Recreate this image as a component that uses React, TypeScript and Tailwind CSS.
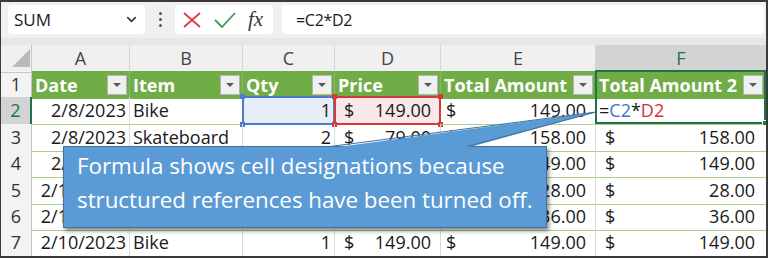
import { ChevronDown } from "lucide-react";

const rows = [
  { n: 2, date: "2/8/2023", item: "Bike", qty: 1, price: "149.00", total: "149.00", total2: "" },
  { n: 3, date: "2/8/2023", item: "Skateboard", qty: 2, price: "79.00", total: "158.00", total2: "158.00" },
  { n: 4, date: "2/9/2023", item: "Bike", qty: 1, price: "149.00", total: "149.00", total2: "149.00" },
  { n: 5, date: "2/10/2023", item: "Helmet", qty: 1, price: "28.00", total: "28.00", total2: "28.00" },
  { n: 6, date: "2/10/2023", item: "Gloves", qty: 2, price: "18.00", total: "36.00", total2: "36.00" },
  { n: 7, date: "2/10/2023", item: "Bike", qty: 1, price: "149.00", total: "149.00", total2: "149.00" },
];

const headers = ["Date", "Item", "Qty", "Price", "Total Amount", "Total Amount 2"];
const letters = ["A", "B", "C", "D", "E", "F"];

function FilterButton() {
  return (
    <div className="mr-[2px] w-[20px] h-[20px] shrink-0 bg-[#f0f0f0] border border-[#b4b4b4] flex items-center justify-center">
      <div className="w-0 h-0 border-l-[4px] border-r-[4px] border-t-[4px] border-l-transparent border-r-transparent border-t-[#5a5a5a]" />
    </div>
  );
}

function Money({ v, pl, pr }: { v: string; pl: string; pr: string }) {
  return (
    <div className={`w-full flex items-center justify-between ${pl} ${pr}`}>
      <span>$</span>
      <span>{v}</span>
    </div>
  );
}

const cell =
  "relative flex items-center border-r border-r-[#dadada] border-b border-b-[#a9d08e] whitespace-nowrap overflow-visible text-[18px] text-[#1a1a1a]";

export default function App() {
  return (
    <div className="relative w-[768px] h-[258px] overflow-hidden bg-white border-t-2 border-r-2 border-b-2 border-l border-[#3a3a3a] font-['Open_Sans',sans-serif]">
      {/* formula bar */}
      <div className="h-[36px] bg-[#f0f0f0] flex items-start pt-[3px]">
        <div className="ml-[7px] w-[137px] h-[29px] bg-white rounded-[4px] flex items-center justify-between pl-[6px] pr-[6px]">
          <span className="text-[17px] text-[#1a1a1a]">SUM</span>
          <ChevronDown size={15} strokeWidth={2.5} className="text-[#333]" />
        </div>
        <div className="w-[30px] h-[29px] flex flex-col items-center justify-center gap-[3px]">
          <div className="w-[3px] h-[3px] rounded-full bg-[#555]" />
          <div className="w-[3px] h-[3px] rounded-full bg-[#555]" />
          <div className="w-[3px] h-[3px] rounded-full bg-[#555]" />
        </div>
        <div className="w-[98px] h-[29px] bg-white rounded-[4px] flex items-center pl-[8px]">
          <svg width="18" height="16" viewBox="0 0 18 16">
            <path d="M1 1 L17 15 M17 1 L1 15" stroke="#e4393f" strokeWidth="1.8" fill="none" />
          </svg>
          <svg width="22" height="16" viewBox="0 0 22 16" className="ml-[13px]">
            <path d="M1 8 L8 15 L21 1" stroke="#3a9a54" strokeWidth="1.8" fill="none" />
          </svg>
          <span className="ml-[12px] font-['Liberation_Serif',serif] italic text-[21px] leading-none text-[#3a3a3a]">
            fx
          </span>
        </div>
        <div className="ml-[9px] flex-1 mr-[2px] h-[29px] bg-white rounded-[4px] flex items-center pl-[14px] text-[16px] tracking-[-0.3px] text-[#1a1a1a]">
          =C2*D2
        </div>
      </div>
      <div className="h-[7px] bg-[#e6e6e6]" />

      {/* column letters */}
      <div className="grid grid-cols-[31px_98px_113px_92px_106px_155px_170px] h-[26px] bg-[#f0f0f0] text-[18px] text-[#444]">
        <div className="relative border-r border-r-[#c8c8c8] border-b border-b-[#c8c8c8]">
          <svg width="31" height="26" className="absolute left-0 top-0">
            <polygon points="29,4 29,22 11,22" fill="#b9b9b9" />
          </svg>
        </div>
        {letters.map((l) => (
          <div
            key={l}
            className={
              l === "F"
                ? "flex items-center justify-center bg-[#d3d3d3] text-[#217346] border-b border-b-[#c8c8c8]"
                : "flex items-center justify-center border-r border-r-[#d4d4d4] border-b border-b-[#c8c8c8]"
            }
          >
            {l}
          </div>
        ))}
      </div>

      {/* table header row */}
      <div className="grid grid-cols-[31px_98px_113px_92px_106px_155px_170px] h-[26.4px]">
        <div className="flex items-center justify-center bg-[#f3f3f3] text-[18px] text-[#333] border-r border-r-[#c8c8c8] border-b border-b-[#d4d4d4]">
          1
        </div>
        {headers.map((h, i) => (
          <div
            key={h}
            className="relative flex items-center justify-between bg-[#70ad47] border-r border-r-[#86ba63] pl-[3px] text-[18px] font-bold text-white whitespace-nowrap"
          >
            <span>{h}</span>
            <FilterButton />
            {i === 5 && (
              <div className="absolute left-[-1px] top-[-1px] w-[171px] h-[54px] border-2 border-[#217346] z-10 pointer-events-none">
                <div className="absolute right-[-4px] bottom-[-4px] w-[6px] h-[6px] bg-[#217346] border border-white" />
              </div>
            )}
          </div>
        ))}
      </div>

      {/* data rows */}
      {rows.map((r) => {
        const active = r.n === 2;
        return (
          <div key={r.n} className="grid grid-cols-[31px_98px_113px_92px_106px_155px_170px] h-[26.4px]">
            <div
              className={
                active
                  ? "flex items-center justify-center bg-[#d3d3d3] text-[18px] text-[#217346] border-r-2 border-r-[#217346] border-b border-b-[#d4d4d4]"
                  : "flex items-center justify-center bg-[#f3f3f3] text-[18px] text-[#333] border-r border-r-[#c8c8c8] border-b border-b-[#d4d4d4]"
              }
            >
              {r.n}
            </div>
            <div className={`${cell} justify-end pr-[3px]`}>{r.date}</div>
            <div className={`${cell} pl-[3px]`}>{r.item}</div>
            <div className={`${cell} justify-end pr-[3px] ${active ? "bg-[#e8eef8]" : ""}`}>
              {r.qty}
              {active && (
                <div className="absolute left-[-1px] top-[-1px] right-[-1px] bottom-[-1px] border-2 border-[#4a7bd0] pointer-events-none">
                  <div className="absolute left-[-4px] top-[-4px] w-[5px] h-[5px] bg-[#4a7bd0]" />
                  <div className="absolute right-[-4px] top-[-4px] w-[5px] h-[5px] bg-[#4a7bd0]" />
                  <div className="absolute left-[-4px] bottom-[-4px] w-[5px] h-[5px] bg-[#4a7bd0]" />
                  <div className="absolute right-[-4px] bottom-[-4px] w-[5px] h-[5px] bg-[#4a7bd0]" />
                </div>
              )}
            </div>
            <div className={`${cell} ${active ? "bg-[#fbe8e8]" : ""}`}>
              <Money v={r.price} pl="pl-[9px]" pr="pr-[9px]" />
              {active && (
                <div className="absolute left-[-1px] top-[-1px] right-[-1px] bottom-[-1px] border-2 border-[#d13b3b] pointer-events-none">
                  <div className="absolute left-[-4px] top-[-4px] w-[5px] h-[5px] bg-[#d13b3b]" />
                  <div className="absolute right-[-4px] top-[-4px] w-[5px] h-[5px] bg-[#d13b3b]" />
                  <div className="absolute left-[-4px] bottom-[-4px] w-[5px] h-[5px] bg-[#d13b3b]" />
                  <div className="absolute right-[-4px] bottom-[-4px] w-[5px] h-[5px] bg-[#d13b3b]" />
                </div>
              )}
            </div>
            <div className={cell}>
              <Money v={r.total} pl="pl-[5px]" pr="pr-[9px]" />
            </div>
            <div className={`${cell} border-r-0`}>
              {active ? (
                <span className="pl-[3px]">
                  =<span className="text-[#3b73d1]">C2</span>*<span className="text-[#d2303a]">D2</span>
                </span>
              ) : (
                <Money v={r.total2} pl="pl-[9px]" pr="pr-[11px]" />
              )}
            </div>
          </div>
        );
      })}

      {/* callout */}
      <div className="absolute left-[62px] top-[144px] w-[484px] h-[82px] bg-[#5b9bd5] border border-[#41719c] shadow-[2px_3px_4px_rgba(0,0,0,0.45)] z-20 pl-[13px] pt-[2px] text-[22.3px] leading-[34px] text-white whitespace-nowrap">
        <div>Formula shows cell designations because</div>
        <div>structured references have been turned off.</div>
      </div>
      <svg width="764" height="254" className="absolute left-0 top-0 z-30 pointer-events-none">
        <polygon points="329.5,146 595,110 465.5,146" fill="#5b9bd5" />
        <polyline points="329,144.5 595,110 466,144.5" fill="none" stroke="#41719c" strokeWidth="1" />
      </svg>
    </div>
  );
}
